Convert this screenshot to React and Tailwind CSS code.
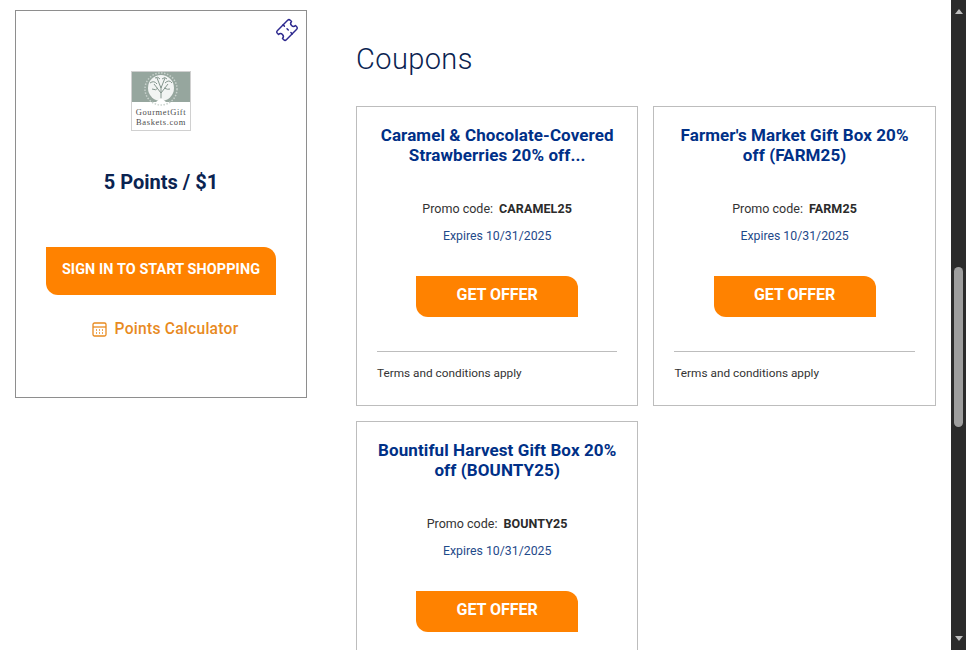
import React from "react";
import { Ticket } from "lucide-react";

const font = { fontFamily: '"Roboto", "Liberation Sans", sans-serif' };

function Coupon({ title, code }) {
  return (
    <div className="w-[282.4px] h-[300px] shrink-0 border border-[#bdbdbd] bg-white flex flex-col px-5 pt-[18px]">
      <h3 className="text-[17px] leading-[20px] font-bold text-[#003087] text-center tracking-[0.1px] h-[40px]">{title}</h3>
      <p className="mt-[35px] text-[12.5px] leading-[18px] text-[#333333] text-center">
        Promo code:<span className="ml-[6px] font-bold text-[#2b2b2b] tracking-[0.1px]">{code}</span>
      </p>
      <p className="mt-[9px] text-[12.3px] leading-[18px] text-[#1f4a8a] text-center">Expires 10/31/2025</p>
      <button className="mt-[31px] self-center w-[162px] h-[41px] shrink-0 bg-[#ff8200] text-white font-bold text-[16px] leading-[36px] pb-[3px] rounded-tr-[12px] rounded-bl-[12px] rounded-tl-none rounded-br-none">GET OFFER</button>
      <div className="mt-[34px] border-t border-[#bdbdbd] pt-[13px] text-[11.8px] leading-[16px] text-[#333333]">Terms and conditions apply</div>
    </div>
  );
}

function Logo() {
  return (
    <div className="w-[60px] h-[60px] border border-[#d0d0d0] bg-white flex flex-col overflow-hidden">
      <div className="h-[30px] shrink-0 bg-[#96a69e] flex justify-center">
        <svg width="36" height="36" viewBox="0 0 36 36" className="shrink-0 -mt-[1px]" style={{ overflow: "visible" }}>
          <circle cx="18" cy="18" r="16" fill="none" stroke="#c9d2cd" strokeWidth="1.5" strokeDasharray="1.5 1.5" />
          <circle cx="18" cy="17" r="13" fill="#f2f4f3" />
          <g fill="none" stroke="#84958d" strokeWidth="1">
            <path d="M18 30 V15 M18 22 L11 13 M18 22 L25 13 M18 17 L14 7 M18 17 L22 7" />
            <path d="M7 12 q4 -3 7 1 M22 12 q4 -4 7 0 M9 18 q4 2 6 -1 M21 17 q4 2 6 1 M12 7 q3 -2 5 1 M19 8 q3 -3 5 0" />
          </g>
          <path d="M13 31 L18 27 L23 31 Z" fill="#ffffff" />
        </svg>
      </div>
      <div className="flex-1 flex flex-col items-center justify-center pt-[2px] text-[#4d4d4d] text-[8.5px] leading-[10px] tracking-[0.6px] whitespace-nowrap" style={{ fontFamily: '"Liberation Serif", serif' }}>
        <span>GourmetGift</span>
        <span>Baskets.com</span>
      </div>
    </div>
  );
}

function CalcIcon() {
  return (
    <svg width="15" height="15" viewBox="0 0 15 15" fill="none" stroke="currentColor" strokeWidth="1.3" className="shrink-0">
      <rect x="1" y="1" width="13" height="13" rx="1.5" />
      <path d="M1 5 H14" />
      <path d="M4 8 H5 M7 8 H8 M10 8 H11 M4 11 H5 M7 11 H8 M10 11 H11" strokeWidth="1.4" />
    </svg>
  );
}

export default function App() {
  return (
    <div className="relative w-[966px] h-[650px] overflow-hidden bg-white flex" style={font}>
      <div className="flex-1 flex items-start pl-[15px] pt-[10px]">
        <aside className="relative w-[292px] h-[388px] shrink-0 border border-[#8e8e8e] flex flex-col items-center pt-[60px]">
          <Ticket className="absolute right-[8px] top-[8px] w-[22px] h-[22px] text-[#2e2a8f] -rotate-45" strokeWidth={1.6} />
          <Logo />
          <div className="mt-[39px] text-[20px] leading-[24px] font-bold text-[#0a2351]">5 Points / $1</div>
          <button className="mt-[53px] w-[230px] h-[48px] bg-[#ff8200] text-white font-bold text-[14.4px] pb-[3px] rounded-tr-[12px] rounded-bl-[12px] tracking-[0.1px]">SIGN IN TO START SHOPPING</button>
          <div className="mt-[24px] ml-[8px] flex items-center gap-[8px] text-[#e88a1f] font-medium text-[15.6px] leading-[20px] tracking-[0.25px]">
            <CalcIcon />
            <span>Points Calculator</span>
          </div>
        </aside>
        <main className="ml-[49px] flex-1">
          <h1 className="mt-[30px] text-[29px] leading-[38px] font-light text-[#0a2351] tracking-[0.4px]">Coupons</h1>
          <div className="mt-[28px] flex flex-wrap gap-[15px]">
            <Coupon title="Caramel & Chocolate-Covered Strawberries 20% off..." code="CARAMEL25" />
            <Coupon title="Farmer's Market Gift Box 20% off (FARM25)" code="FARM25" />
            <Coupon title="Bountiful Harvest Gift Box 20% off (BOUNTY25)" code="BOUNTY25" />
          </div>
        </main>
      </div>
      <div className="relative w-[15px] h-full shrink-0 bg-[#2b2b2b] flex flex-col items-center justify-between py-[9px]">
        <div className="w-0 h-0 border-x-[4px] border-x-transparent border-b-[5px] border-b-[#bdbdbd]" />
        <div className="absolute left-[3px] top-[267px] w-[9px] h-[160px] rounded-full bg-[#9e9e9e]" />
        <div className="w-0 h-0 border-x-[4px] border-x-transparent border-t-[5px] border-t-[#bdbdbd]" />
      </div>
    </div>
  );
}
